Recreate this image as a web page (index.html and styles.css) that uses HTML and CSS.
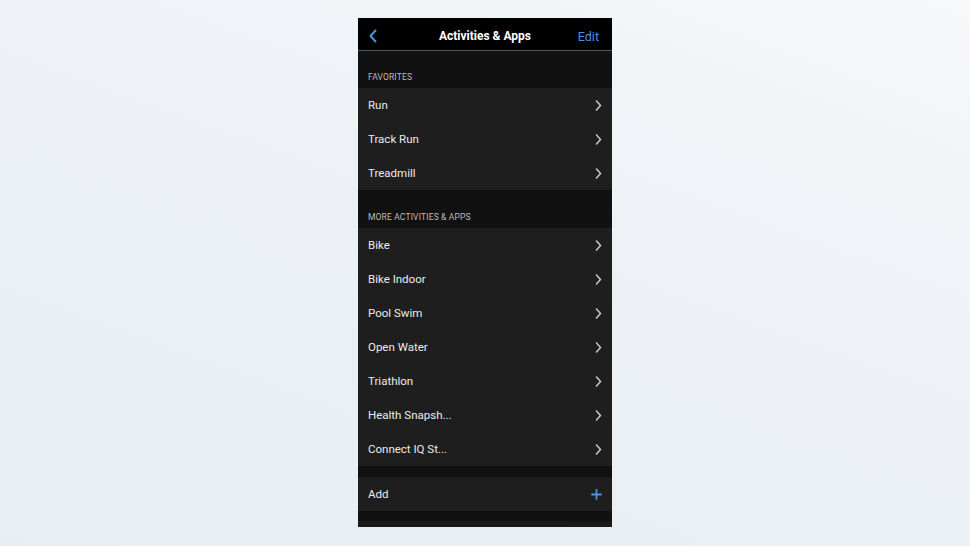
FILE: index.html
```html
<!DOCTYPE html>
<html>
<head>
<meta charset="utf-8">
<link rel="stylesheet" href="styles.css">
</head>
<body>
<div class="phone">
  <header class="nav">
    <svg class="back" width="10" height="14" viewBox="0 0 10 14"><path d="M7.5 1.5 L2.5 7 L7.5 12.5" fill="none" stroke="#4a92e0" stroke-width="2" stroke-linecap="round" stroke-linejoin="round"/></svg>
    <div class="title">Activities &amp; Apps</div>
    <div class="edit">Edit</div>
  </header>
  <div class="label first">FAVORITES</div>
  <div class="group">
    <div class="row"><span>Run</span><svg class="chev" width="7" height="11" viewBox="0 0 7 11"><path d="M1.5 1 L5.5 5.5 L1.5 10" fill="none" stroke="#c4c4c6" stroke-width="1.6" stroke-linecap="round" stroke-linejoin="round"/></svg></div>
    <div class="row"><span>Track Run</span><svg class="chev" width="7" height="11" viewBox="0 0 7 11"><path d="M1.5 1 L5.5 5.5 L1.5 10" fill="none" stroke="#c4c4c6" stroke-width="1.6" stroke-linecap="round" stroke-linejoin="round"/></svg></div>
    <div class="row"><span>Treadmill</span><svg class="chev" width="7" height="11" viewBox="0 0 7 11"><path d="M1.5 1 L5.5 5.5 L1.5 10" fill="none" stroke="#c4c4c6" stroke-width="1.6" stroke-linecap="round" stroke-linejoin="round"/></svg></div>
  </div>
  <div class="label">MORE ACTIVITIES &amp; APPS</div>
  <div class="group">
    <div class="row"><span>Bike</span><svg class="chev" width="7" height="11" viewBox="0 0 7 11"><path d="M1.5 1 L5.5 5.5 L1.5 10" fill="none" stroke="#c4c4c6" stroke-width="1.6" stroke-linecap="round" stroke-linejoin="round"/></svg></div>
    <div class="row"><span>Bike Indoor</span><svg class="chev" width="7" height="11" viewBox="0 0 7 11"><path d="M1.5 1 L5.5 5.5 L1.5 10" fill="none" stroke="#c4c4c6" stroke-width="1.6" stroke-linecap="round" stroke-linejoin="round"/></svg></div>
    <div class="row"><span>Pool Swim</span><svg class="chev" width="7" height="11" viewBox="0 0 7 11"><path d="M1.5 1 L5.5 5.5 L1.5 10" fill="none" stroke="#c4c4c6" stroke-width="1.6" stroke-linecap="round" stroke-linejoin="round"/></svg></div>
    <div class="row"><span>Open Water</span><svg class="chev" width="7" height="11" viewBox="0 0 7 11"><path d="M1.5 1 L5.5 5.5 L1.5 10" fill="none" stroke="#c4c4c6" stroke-width="1.6" stroke-linecap="round" stroke-linejoin="round"/></svg></div>
    <div class="row"><span>Triathlon</span><svg class="chev" width="7" height="11" viewBox="0 0 7 11"><path d="M1.5 1 L5.5 5.5 L1.5 10" fill="none" stroke="#c4c4c6" stroke-width="1.6" stroke-linecap="round" stroke-linejoin="round"/></svg></div>
    <div class="row"><span>Health Snapsh...</span><svg class="chev" width="7" height="11" viewBox="0 0 7 11"><path d="M1.5 1 L5.5 5.5 L1.5 10" fill="none" stroke="#c4c4c6" stroke-width="1.6" stroke-linecap="round" stroke-linejoin="round"/></svg></div>
    <div class="row"><span>Connect IQ St...</span><svg class="chev" width="7" height="11" viewBox="0 0 7 11"><path d="M1.5 1 L5.5 5.5 L1.5 10" fill="none" stroke="#c4c4c6" stroke-width="1.6" stroke-linecap="round" stroke-linejoin="round"/></svg></div>
  </div>
  <div class="spacer"></div>
  <div class="group">
    <div class="row"><span>Add</span><svg class="plus" width="11" height="11" viewBox="0 0 11 11"><path d="M5.5 1 V10 M1 5.5 H10" fill="none" stroke="#4a92e0" stroke-width="1.8" stroke-linecap="round"/></svg></div>
  </div>
  <div class="spacer small"></div>
  <div class="strip"></div>
</div>
</body>
</html>
```

FILE: styles.css
```css
html, body {
  margin: 0;
  padding: 0;
}
body {
  width: 970px;
  height: 546px;
  background: linear-gradient(200deg, #f6f8fa 0%, #edf1f5 45%, #e9eef3 100%);
  font-family: Roboto, "Liberation Sans", sans-serif;
  display: flex;
  justify-content: center;
  overflow: hidden;
}
.phone {
  width: 254px;
  margin-top: 18px;
  height: 509px;
  background: #111111;
  display: flex;
  flex-direction: column;
  color: #ececec;
}
.nav {
  height: 32px;
  background: #000000;
  border-bottom: 1px solid #4c5a68;
  display: flex;
  align-items: center;
  padding: 0 13px 0 9px;
}
.back {
  display: block;
  margin-top: 4px;
  margin-left: 1px;
}
.title {
  flex: 1;
  text-align: center;
  font-weight: 700;
  font-size: 12px;
  color: #ffffff;
  margin-left: 14px;
  margin-top: 4px;
}
.edit {
  color: #4a92e0;
  font-size: 12.5px;
  margin-top: 4px;
}
.label {
  height: 38px;
  box-sizing: border-box;
  padding: 0 10px 6px;
  display: flex;
  align-items: flex-end;
  font-size: 8.5px;
  letter-spacing: 0.15px;
  color: #bdbdbd;
}
.label.first {
  height: 37px;
}
.group {
  background: #1e1e1e;
}
.row {
  height: 34px;
  display: flex;
  align-items: center;
  justify-content: space-between;
  padding: 0 10px 0 10px;
  font-size: 11.5px;
  color: #ececec;
}
.chev {
  display: block;
}
.plus {
  display: block;
}
.spacer {
  height: 11px;
}
.spacer.small {
  height: 10px;
}
.strip {
  flex: 1;
  background: #1a1a1a;
}
```
